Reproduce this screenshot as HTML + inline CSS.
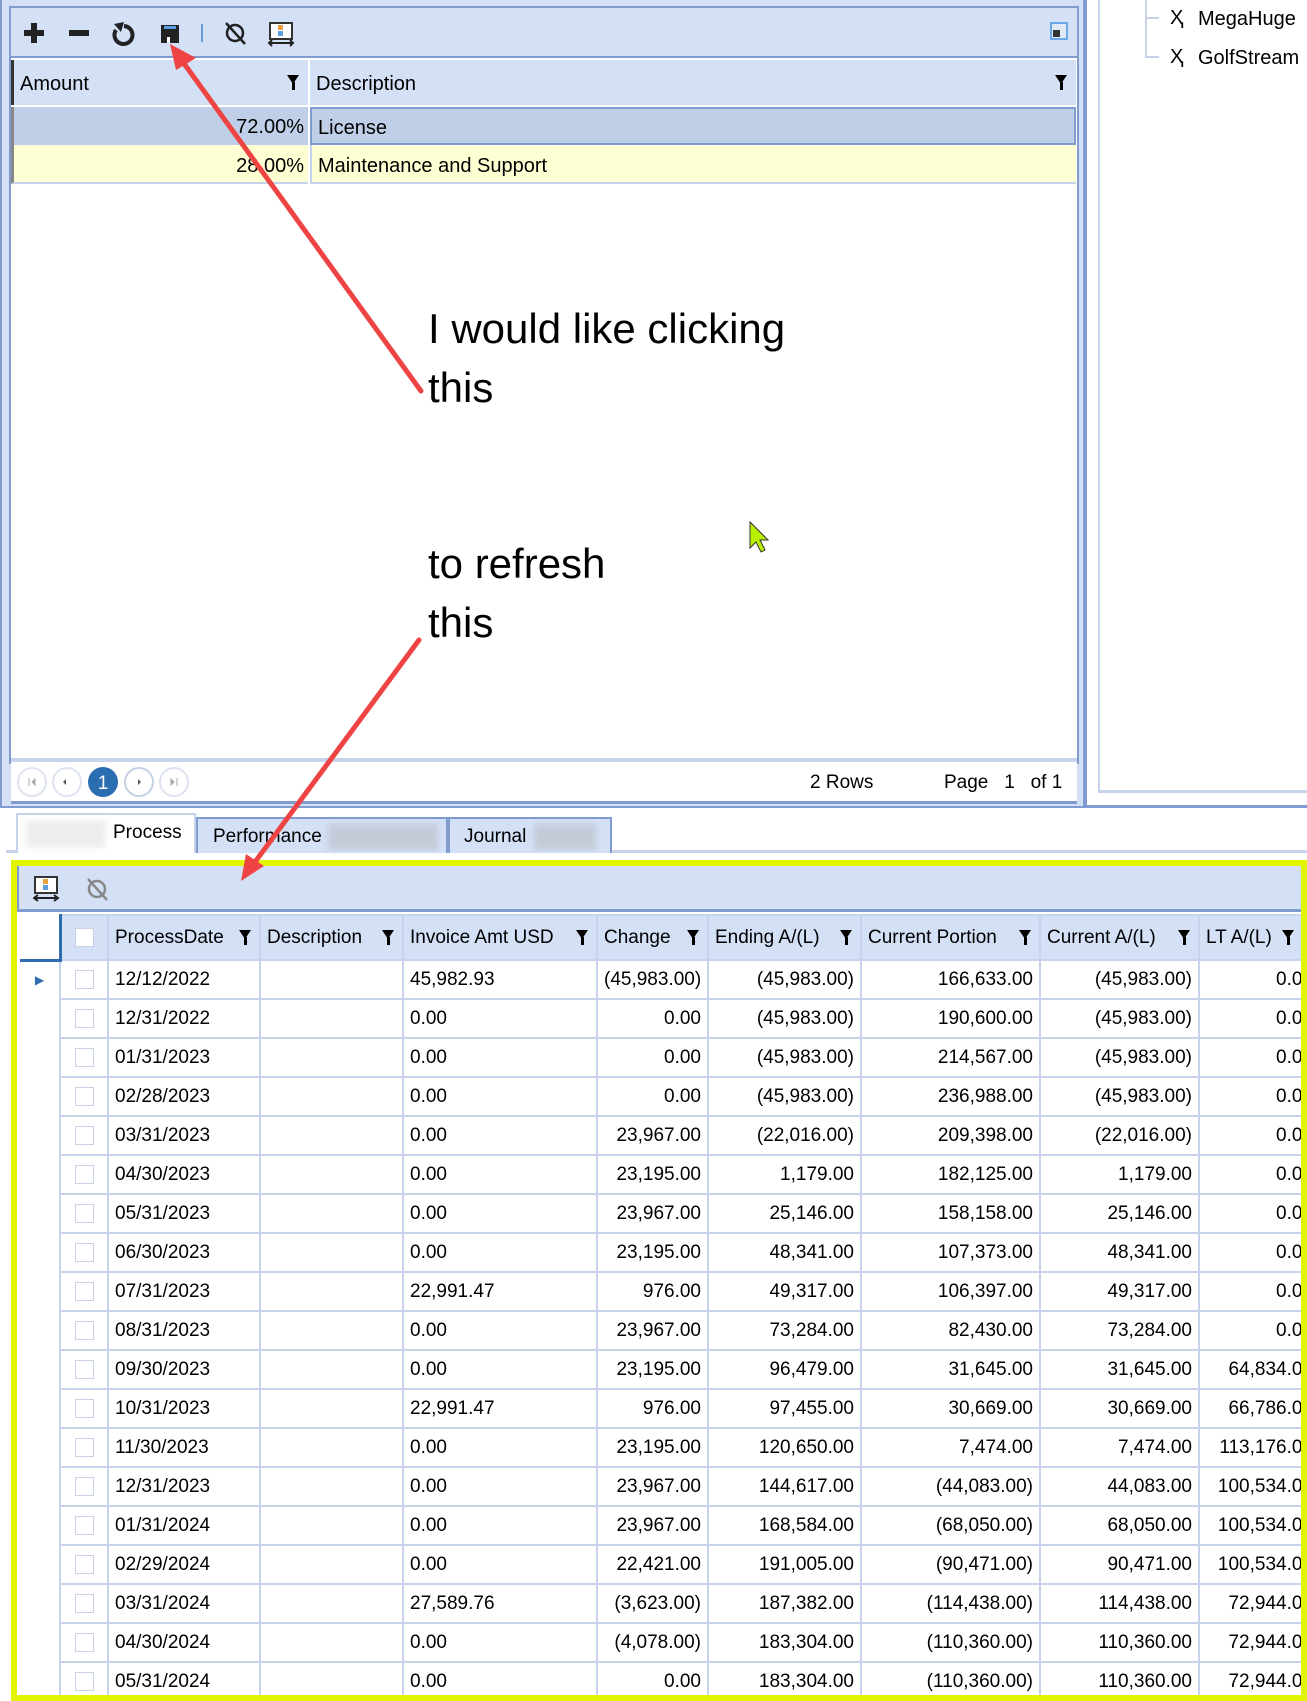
<!DOCTYPE html>
<html><head><meta charset="utf-8"><style>
*{margin:0;padding:0;box-sizing:border-box}
body{width:1307px;height:1701px;position:relative;background:#fff;font-family:"Liberation Sans",sans-serif;color:#000;overflow:hidden}
.a{position:absolute}
.tb{background:#d4e0f6}
.flt{position:absolute;width:0;height:0;border-left:6px solid transparent;border-right:6px solid transparent;border-top:9px solid #000}
.flt:after{content:"";position:absolute;left:-1.5px;top:-2px;width:3px;height:8px;background:#000}
table{border-collapse:collapse;table-layout:fixed;font-size:19px}
td{border:2px solid #c6d3ea;height:39px;padding:0 6px;white-space:nowrap;overflow:hidden}
td.r{text-align:right}
td.l{padding-right:0}
.cb{display:inline-block;width:19px;height:19px;border:1px solid #c8d2e4;background:#fff;vertical-align:middle}
.ann{position:absolute;font-size:42px;left:428px}
</style></head><body>
<!-- top panel -->
<div class="a" style="left:0;top:0;width:1085px;height:808px;border:2px solid #7f9bd0;border-top:none;background:#d4e0f6"></div>
<div class="a tb" style="left:9px;top:6px;width:1070px;height:52px;border:2px solid #7f9bd0"></div>
<svg class="a" style="left:20px;top:18px" width="380" height="30" viewBox="0 0 380 30">
<rect x="4" y="12" width="20" height="6" fill="#222"/><rect x="11" y="5" width="6" height="20" fill="#222"/>
<rect x="49" y="12" width="20" height="6" fill="#222"/>
<path d="M104 8 A9 9 0 1 1 96 12" fill="none" stroke="#222" stroke-width="4"/><path d="M94 6 L104 4 L101 14Z" fill="#222"/>
<rect x="141" y="7" width="18" height="18" fill="#222"/><rect x="144" y="8" width="12" height="3" fill="#5aa0e0"/><rect x="147" y="19" width="3" height="6" fill="#fff"/>
<rect x="181" y="6" width="2" height="18" fill="#6a9bd8"/>
<circle cx="215" cy="15" r="8" fill="none" stroke="#222" stroke-width="2.5"/><line x1="206" y1="5" x2="225" y2="26" stroke="#222" stroke-width="2.5"/>
<rect x="250" y="5" width="22" height="16" fill="#fff" stroke="#333" stroke-width="2"/><rect x="258" y="7" width="5" height="5" fill="#e8a040"/><rect x="258" y="13" width="5" height="5" fill="#5aa0e0"/><path d="M250 25 H272 M252 22 L249 25 L252 28 M270 22 L273 25 L270 28" stroke="#222" stroke-width="2" fill="none"/>
</svg>
<div class="a" style="left:1050px;top:22px;width:18px;height:18px;border:2px solid #6aa8e8;background:#dfe9f8"><div style="position:absolute;left:1px;top:6px;width:7px;height:7px;background:#333"></div></div>
<div class="a" style="left:9px;top:58px;width:1070px;height:706px;background:#fff;border-left:2px solid #7f9bd0;border-right:2px solid #7f9bd0"></div>
<div class="a" style="left:11px;top:60px;width:297px;height:45px;background:#d4e0f6;font-size:20px;padding:13px 6px;border-left:3px solid #333">Amount<span class="flt" style="left:273px;top:15px"></span></div>
<div class="a" style="left:310px;top:60px;width:766px;height:45px;background:#d4e0f6;font-size:20px;padding:13px 6px">Description<span class="flt" style="left:745px;top:15px"></span></div>
<div class="a" style="left:11px;top:107px;width:297px;height:38px;background:#c0cfe8;font-size:20px;text-align:right;padding:9px 4px;border-left:3px solid #888">72.00%</div>
<div class="a" style="left:310px;top:107px;width:766px;height:38px;background:#c0cfe8;font-size:20px;padding:8px 6px;border:2px solid #7f9bd0">License</div>
<div class="a" style="left:11px;top:145px;width:297px;height:39px;background:#ffffd4;font-size:20px;text-align:right;padding:10px 4px;border-left:3px solid #888;border-bottom:2px solid #c6d3ea">28.00%</div>
<div class="a" style="left:310px;top:145px;width:766px;height:39px;background:#ffffd4;font-size:20px;padding:10px 6px;border-bottom:2px solid #c6d3ea;border-left:2px solid #c6d3ea">Maintenance and Support</div>
<div class="a" style="left:11px;top:758px;width:1066px;height:4px;background:#c6d3ea"></div>
<div class="a" style="left:11px;top:762px;width:1066px;height:42px;background:#fff;border-bottom:3px solid #7f9bd0"></div>
<svg class="a" style="left:14px;top:763px" width="180" height="38">
<circle cx="18" cy="19" r="14" fill="#fff" stroke="#dde4f0" stroke-width="2"/><circle cx="53" cy="19" r="14" fill="#fff" stroke="#dde4f0" stroke-width="2"/>
<circle cx="89" cy="19" r="15" fill="#2a6db0"/><text x="89" y="26" fill="#fff" font-size="19" text-anchor="middle" font-family="Liberation Sans">1</text>
<circle cx="125" cy="19" r="14" fill="#fff" stroke="#c6d0e4" stroke-width="2"/><circle cx="160" cy="19" r="14" fill="#fff" stroke="#dde4f0" stroke-width="2"/>
<path d="M52 16 L49 19 L52 22Z M124 16 L127 19 L124 22Z" fill="#555"/><path d="M15 15 v8 M21 16 L18 19 L21 22Z M157 16 L160 19 L157 22Z M163 15 v8" stroke="#aaa" fill="#aaa"/>
</svg>
<div class="a" style="left:810px;top:772px;font-size:19px">2 Rows</div>
<div class="a" style="left:944px;top:772px;font-size:19px">Page &nbsp;&nbsp;1 &nbsp;&nbsp;of 1</div>
<!-- right panel -->
<div class="a" style="left:1085px;top:0;width:222px;height:808px;border-left:2px solid #7f9bd0;border-bottom:3px solid #7f9bd0"></div>
<div class="a" style="left:1098px;top:0;width:209px;height:793px;border-left:2px solid #c6d3ea;border-bottom:3px solid #c6d3ea"></div>
<div class="a" style="left:1145px;top:0;width:2px;height:58px;background:#c6d3ea"></div>
<div class="a" style="left:1145px;top:17px;width:14px;height:2px;background:#c6d3ea"></div>
<div class="a" style="left:1145px;top:56px;width:14px;height:2px;background:#c6d3ea"></div>
<div class="a" style="left:1170px;top:7px;font-size:20px">Ҳ</div>
<div class="a" style="left:1170px;top:46px;font-size:20px">Ҳ</div>
<div class="a" style="left:1198px;top:8px;font-size:20px">MegaHuge</div>
<div class="a" style="left:1198px;top:47px;font-size:20px">GolfStream</div>
<!-- tabs -->
<div class="a" style="left:6px;top:850px;width:1301px;height:3px;background:#c6d3ea"></div>
<div class="a" style="left:16px;top:813px;width:180px;height:40px;background:#fff;border:2px solid #c6d3ea;border-bottom:none"></div>
<div class="a" style="left:26px;top:820px;width:80px;height:28px;background:#eee;filter:blur(3px)"></div>
<div class="a" style="left:113px;top:822px;font-size:19px">Process</div>
<div class="a" style="left:196px;top:817px;width:252px;height:36px;background:#d4e0f6;border:2px solid #7f9bd0;border-bottom:none"></div>
<div class="a" style="left:213px;top:826px;font-size:19px">Performance</div>
<div class="a" style="left:328px;top:824px;width:110px;height:26px;background:#c4cbd8;filter:blur(3px)"></div>
<div class="a" style="left:448px;top:817px;width:164px;height:36px;background:#d4e0f6;border:2px solid #7f9bd0;border-bottom:none"></div>
<div class="a" style="left:464px;top:826px;font-size:19px">Journal</div>
<div class="a" style="left:534px;top:824px;width:62px;height:26px;background:#c4cbd8;filter:blur(3px)"></div>
<!-- bottom grid -->
<div class="a" style="left:11px;top:860px;width:1296px;height:841px;border:6px solid #e2f500;background:#fff;overflow:hidden">
<div class="a tb" style="left:0;top:0;width:1290px;height:46px;border-bottom:3px solid #7f9bd0;border-left:2px solid #7f9bd0"></div>
<svg class="a" style="left:16px;top:8px" width="80" height="30">
<rect x="2" y="3" width="22" height="16" fill="#fff" stroke="#333" stroke-width="2"/><rect x="10" y="5" width="5" height="5" fill="#e8a040"/><rect x="10" y="11" width="5" height="5" fill="#5aa0e0"/><path d="M2 24 H24 M5 21 L1 24 L5 27 M21 21 L25 24 L21 27" stroke="#222" stroke-width="2" fill="none"/>
<circle cx="64" cy="15" r="8" fill="none" stroke="#888" stroke-width="2.5"/><line x1="55" y1="5" x2="74" y2="26" stroke="#888" stroke-width="2.5"/>
</svg>
<table class="a" style="left:3px;top:48px;width:1300px">
<colgroup><col style="width:40px"><col style="width:48px"><col style="width:152px"><col style="width:143px"><col style="width:194px"><col style="width:111px"><col style="width:153px"><col style="width:179px"><col style="width:159px"><col style="width:121px"></colgroup>
<tr style="background:#d4e0f6"><td style="height:45px;background:#fff;border-bottom:3px solid #2f6cb0;border-right:3px solid #2f6cb0;border-top:none;border-left:none"></td><td style="text-align:center"><span class="cb"></span></td><td style="position:relative">ProcessDate<span class="flt" style="right:8px;top:14px"></span></td><td style="position:relative">Description<span class="flt" style="right:8px;top:14px"></span></td><td style="position:relative">Invoice Amt USD<span class="flt" style="right:8px;top:14px"></span></td><td style="position:relative">Change<span class="flt" style="right:8px;top:14px"></span></td><td style="position:relative">Ending A/(L)<span class="flt" style="right:8px;top:14px"></span></td><td style="position:relative">Current Portion<span class="flt" style="right:8px;top:14px"></span></td><td style="position:relative">Current A/(L)<span class="flt" style="right:8px;top:14px"></span></td><td style="position:relative">LT A/(L)<span class="flt" style="left:82px;top:14px"></span></td></tr>
<tr><td style="border:none;text-align:center;color:#2f6cb0;font-size:12px">▶</td><td style="text-align:center"><span class="cb"></span></td><td>12/12/2022</td><td></td><td>45,982.93</td><td class="r">(45,983.00)</td><td class="r">(45,983.00)</td><td class="r">166,633.00</td><td class="r">(45,983.00)</td><td class="r">0.00</td></tr>
<tr><td style="border:none"></td><td style="text-align:center"><span class="cb"></span></td><td>12/31/2022</td><td></td><td>0.00</td><td class="r">0.00</td><td class="r">(45,983.00)</td><td class="r">190,600.00</td><td class="r">(45,983.00)</td><td class="r">0.00</td></tr>
<tr><td style="border:none"></td><td style="text-align:center"><span class="cb"></span></td><td>01/31/2023</td><td></td><td>0.00</td><td class="r">0.00</td><td class="r">(45,983.00)</td><td class="r">214,567.00</td><td class="r">(45,983.00)</td><td class="r">0.00</td></tr>
<tr><td style="border:none"></td><td style="text-align:center"><span class="cb"></span></td><td>02/28/2023</td><td></td><td>0.00</td><td class="r">0.00</td><td class="r">(45,983.00)</td><td class="r">236,988.00</td><td class="r">(45,983.00)</td><td class="r">0.00</td></tr>
<tr><td style="border:none"></td><td style="text-align:center"><span class="cb"></span></td><td>03/31/2023</td><td></td><td>0.00</td><td class="r">23,967.00</td><td class="r">(22,016.00)</td><td class="r">209,398.00</td><td class="r">(22,016.00)</td><td class="r">0.00</td></tr>
<tr><td style="border:none"></td><td style="text-align:center"><span class="cb"></span></td><td>04/30/2023</td><td></td><td>0.00</td><td class="r">23,195.00</td><td class="r">1,179.00</td><td class="r">182,125.00</td><td class="r">1,179.00</td><td class="r">0.00</td></tr>
<tr><td style="border:none"></td><td style="text-align:center"><span class="cb"></span></td><td>05/31/2023</td><td></td><td>0.00</td><td class="r">23,967.00</td><td class="r">25,146.00</td><td class="r">158,158.00</td><td class="r">25,146.00</td><td class="r">0.00</td></tr>
<tr><td style="border:none"></td><td style="text-align:center"><span class="cb"></span></td><td>06/30/2023</td><td></td><td>0.00</td><td class="r">23,195.00</td><td class="r">48,341.00</td><td class="r">107,373.00</td><td class="r">48,341.00</td><td class="r">0.00</td></tr>
<tr><td style="border:none"></td><td style="text-align:center"><span class="cb"></span></td><td>07/31/2023</td><td></td><td>22,991.47</td><td class="r">976.00</td><td class="r">49,317.00</td><td class="r">106,397.00</td><td class="r">49,317.00</td><td class="r">0.00</td></tr>
<tr><td style="border:none"></td><td style="text-align:center"><span class="cb"></span></td><td>08/31/2023</td><td></td><td>0.00</td><td class="r">23,967.00</td><td class="r">73,284.00</td><td class="r">82,430.00</td><td class="r">73,284.00</td><td class="r">0.00</td></tr>
<tr><td style="border:none"></td><td style="text-align:center"><span class="cb"></span></td><td>09/30/2023</td><td></td><td>0.00</td><td class="r">23,195.00</td><td class="r">96,479.00</td><td class="r">31,645.00</td><td class="r">31,645.00</td><td class="r">64,834.00</td></tr>
<tr><td style="border:none"></td><td style="text-align:center"><span class="cb"></span></td><td>10/31/2023</td><td></td><td>22,991.47</td><td class="r">976.00</td><td class="r">97,455.00</td><td class="r">30,669.00</td><td class="r">30,669.00</td><td class="r">66,786.00</td></tr>
<tr><td style="border:none"></td><td style="text-align:center"><span class="cb"></span></td><td>11/30/2023</td><td></td><td>0.00</td><td class="r">23,195.00</td><td class="r">120,650.00</td><td class="r">7,474.00</td><td class="r">7,474.00</td><td class="r">113,176.00</td></tr>
<tr><td style="border:none"></td><td style="text-align:center"><span class="cb"></span></td><td>12/31/2023</td><td></td><td>0.00</td><td class="r">23,967.00</td><td class="r">144,617.00</td><td class="r">(44,083.00)</td><td class="r">44,083.00</td><td class="r">100,534.00</td></tr>
<tr><td style="border:none"></td><td style="text-align:center"><span class="cb"></span></td><td>01/31/2024</td><td></td><td>0.00</td><td class="r">23,967.00</td><td class="r">168,584.00</td><td class="r">(68,050.00)</td><td class="r">68,050.00</td><td class="r">100,534.00</td></tr>
<tr><td style="border:none"></td><td style="text-align:center"><span class="cb"></span></td><td>02/29/2024</td><td></td><td>0.00</td><td class="r">22,421.00</td><td class="r">191,005.00</td><td class="r">(90,471.00)</td><td class="r">90,471.00</td><td class="r">100,534.00</td></tr>
<tr><td style="border:none"></td><td style="text-align:center"><span class="cb"></span></td><td>03/31/2024</td><td></td><td>27,589.76</td><td class="r">(3,623.00)</td><td class="r">187,382.00</td><td class="r">(114,438.00)</td><td class="r">114,438.00</td><td class="r">72,944.00</td></tr>
<tr><td style="border:none"></td><td style="text-align:center"><span class="cb"></span></td><td>04/30/2024</td><td></td><td>0.00</td><td class="r">(4,078.00)</td><td class="r">183,304.00</td><td class="r">(110,360.00)</td><td class="r">110,360.00</td><td class="r">72,944.00</td></tr>
<tr><td style="border:none"></td><td style="text-align:center"><span class="cb"></span></td><td>05/31/2024</td><td></td><td>0.00</td><td class="r">0.00</td><td class="r">183,304.00</td><td class="r">(110,360.00)</td><td class="r">110,360.00</td><td class="r">72,944.00</td></tr>
</table>
</div>
<!-- annotations -->
<div class="ann" style="top:305px">I would like clicking</div>
<div class="ann" style="top:364px">this</div>
<div class="ann" style="top:540px">to refresh</div>
<div class="ann" style="top:599px">this</div>
<svg class="a" style="left:0;top:0" width="1307" height="1701">
<line x1="421" y1="391" x2="180" y2="58" stroke="#ee4444" stroke-width="5" stroke-linecap="round"/>
<path d="M170 44 L196 58 L176 70Z" fill="#ee4444"/>
<line x1="419" y1="640" x2="252" y2="866" stroke="#ee4444" stroke-width="5" stroke-linecap="round"/>
<path d="M241 881 L246 854 L264 866Z" fill="#ee4444"/>
<path d="M750 522 L750 548 L756 542 L761 552 L765 550 L760 540 L768 540Z" fill="#b8f000" stroke="#333" stroke-width="1"/>
</svg>
</body></html>
